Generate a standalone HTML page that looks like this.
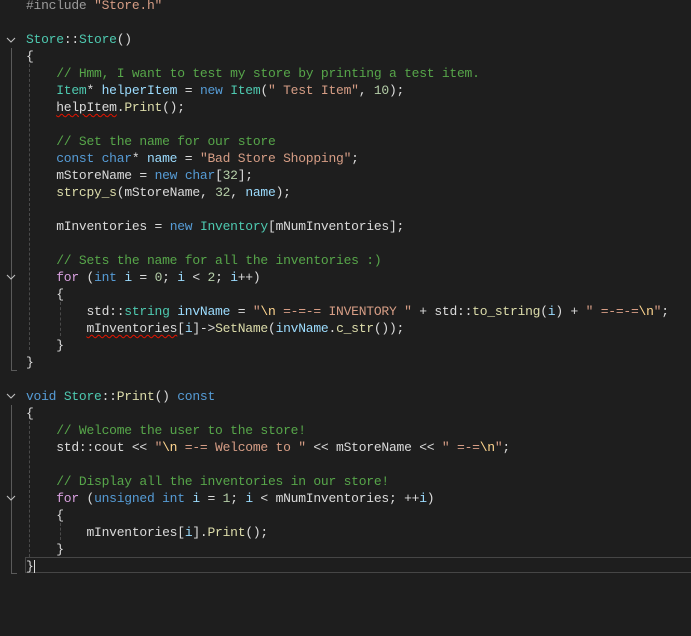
<!DOCTYPE html><html><head><style>
body{margin:0;width:691px;height:636px;background:#1e1e1e;overflow:hidden;position:relative;font-family:"Liberation Mono",monospace;font-size:13px;letter-spacing:-0.24px;color:#dcdcdc}
.l{position:absolute;left:26px;height:17px;line-height:17px;white-space:pre}
.c{color:#57a64a}.k{color:#569cd6}.t{color:#4ec9b0}.s{color:#d69d85}.f{color:#dcdcaa}.v{color:#9cdcfe}.p{color:#d8a0df}.n{color:#b5cea8}.pp{color:#9b9b9b}.e{color:#ffd68f}.m{color:#dadada}
.sq{text-decoration:underline wavy #e51400;text-decoration-thickness:1px;text-underline-offset:2px}
.g{position:absolute;border-left:1px dashed #4a4a4a;width:0}
.o{position:absolute;left:11px;width:5px;border-left:1px solid #5a5a5a;border-bottom:1px solid #5a5a5a}
.ch{position:absolute;left:6px}
</style></head><body>
<div class="o" style="top:48px;height:322px"></div>
<div class="o" style="top:405px;height:168px"></div>
<div class="g" style="left:29px;top:64px;height:286px"></div>
<div class="g" style="left:60px;top:302px;height:34px"></div>
<div class="g" style="left:29px;top:421px;height:136px"></div>
<div class="g" style="left:60px;top:523px;height:17px"></div>
<div style="position:absolute;left:25px;top:557px;width:668px;height:16px;border:1px solid #464646;border-right:none;box-sizing:border-box"></div>
<svg class="ch" style="top:36px" width="10" height="8"><path d="M1 2 L5 6 L9 2" stroke="#c0c0c0" fill="none" stroke-width="1.1"/></svg>
<svg class="ch" style="top:273px" width="10" height="8"><path d="M1 2 L5 6 L9 2" stroke="#c0c0c0" fill="none" stroke-width="1.1"/></svg>
<svg class="ch" style="top:392px" width="10" height="8"><path d="M1 2 L5 6 L9 2" stroke="#c0c0c0" fill="none" stroke-width="1.1"/></svg>
<svg class="ch" style="top:494px" width="10" height="8"><path d="M1 2 L5 6 L9 2" stroke="#c0c0c0" fill="none" stroke-width="1.1"/></svg>
<div class="l pp" style="top:-3px">#include <span class="s">"Store.h"</span></div>
<div class="l" style="top:31px"><span class="t">Store</span>::<span class="t">Store</span>()</div>
<div class="l" style="top:48px">{</div>
<div class="l" style="top:65px">    <span class="c">// Hmm, I want to test my store by printing a test item.</span></div>
<div class="l" style="top:82px">    <span class="t">Item</span>* <span class="v">helperItem</span> = <span class="k">new</span> <span class="t">Item</span>(<span class="s">" Test Item"</span>, <span class="n">10</span>);</div>
<div class="l" style="top:99px">    <span class="sq">helpItem</span>.<span class="f">Print</span>();</div>
<div class="l" style="top:133px">    <span class="c">// Set the name for our store</span></div>
<div class="l" style="top:150px">    <span class="k">const</span> <span class="k">char</span>* <span class="v">name</span> = <span class="s">"Bad Store Shopping"</span>;</div>
<div class="l" style="top:167px">    <span class="m">mStoreName</span> = <span class="k">new</span> <span class="k">char</span>[<span class="n">32</span>];</div>
<div class="l" style="top:184px">    <span class="f">strcpy_s</span>(<span class="m">mStoreName</span>, <span class="n">32</span>, <span class="v">name</span>);</div>
<div class="l" style="top:218px">    <span class="m">mInventories</span> = <span class="k">new</span> <span class="t">Inventory</span>[<span class="m">mNumInventories</span>];</div>
<div class="l" style="top:252px">    <span class="c">// Sets the name for all the inventories :)</span></div>
<div class="l" style="top:269px">    <span class="p">for</span> (<span class="k">int</span> <span class="v">i</span> = <span class="n">0</span>; <span class="v">i</span> &lt; <span class="n">2</span>; <span class="v">i</span>++)</div>
<div class="l" style="top:286px">    {</div>
<div class="l" style="top:303px">        std::<span class="t">string</span> <span class="v">invName</span> = <span class="s">"<span class="e">\n</span> =-=-= INVENTORY "</span> + std::<span class="f">to_string</span>(<span class="v">i</span>) + <span class="s">" =-=-=<span class="e">\n</span>"</span>;</div>
<div class="l" style="top:320px">        <span class="sq m">mInventories</span>[<span class="v">i</span>]-&gt;<span class="f">SetName</span>(<span class="v">invName</span>.<span class="f">c_str</span>());</div>
<div class="l" style="top:337px">    }</div>
<div class="l" style="top:354px">}</div>
<div class="l" style="top:388px"><span class="k">void</span> <span class="t">Store</span>::<span class="f">Print</span>() <span class="k">const</span></div>
<div class="l" style="top:405px">{</div>
<div class="l" style="top:422px">    <span class="c">// Welcome the user to the store!</span></div>
<div class="l" style="top:439px">    std::<span class="m">cout</span> &lt;&lt; <span class="s">"<span class="e">\n</span> =-= Welcome to "</span> &lt;&lt; <span class="m">mStoreName</span> &lt;&lt; <span class="s">" =-=<span class="e">\n</span>"</span>;</div>
<div class="l" style="top:473px">    <span class="c">// Display all the inventories in our store!</span></div>
<div class="l" style="top:490px">    <span class="p">for</span> (<span class="k">unsigned</span> <span class="k">int</span> <span class="v">i</span> = <span class="n">1</span>; <span class="v">i</span> &lt; <span class="m">mNumInventories</span>; ++<span class="v">i</span>)</div>
<div class="l" style="top:507px">    {</div>
<div class="l" style="top:524px">        <span class="m">mInventories</span>[<span class="v">i</span>].<span class="f">Print</span>();</div>
<div class="l" style="top:541px">    }</div>
<div class="l" style="top:558px">}</div>
<div style="position:absolute;left:34px;top:560px;width:1px;height:13px;background:#dcdcdc"></div>
</body></html>
